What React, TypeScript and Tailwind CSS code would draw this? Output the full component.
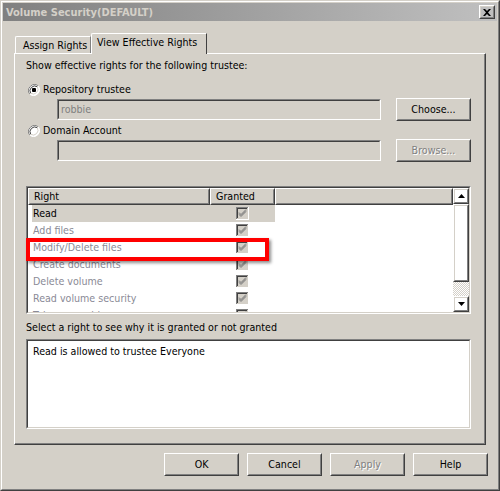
import React from "react";

const FONT = "font-['Tahoma','DejaVu_Sans_Condensed','Liberation_Sans',sans-serif]";

function Raised({ className = "", children }: { className?: string; children?: React.ReactNode }) {
  return (
    <div className={`border border-t-white border-l-white border-r-[#404040] border-b-[#404040] ${className}`}>
      <div className="w-full h-full border border-t-[#d4d0c8] border-l-[#d4d0c8] border-r-[#808080] border-b-[#808080] flex items-center justify-center">
        {children}
      </div>
    </div>
  );
}

function Sunken({ className = "", inner = "", children }: { className?: string; inner?: string; children?: React.ReactNode }) {
  return (
    <div className={`border border-t-[#808080] border-l-[#808080] border-r-white border-b-white ${className}`}>
      <div className={`w-full h-full border border-t-[#404040] border-l-[#404040] border-r-[#d4d0c8] border-b-[#d4d0c8] ${inner}`}>
        {children}
      </div>
    </div>
  );
}

function Button({ label, disabled = false }: { label: string; disabled?: boolean }) {
  return (
    <Raised className="w-[75px] h-[23px]">
      <span className={disabled ? "text-[#808080] [text-shadow:1px_1px_0_#fff]" : "text-black"}>{label}</span>
    </Raised>
  );
}

function Radio({ checked }: { checked: boolean }) {
  return (
    <svg width="12" height="12" viewBox="0 0 12 12" className="shrink-0">
      <circle cx="6" cy="6" r="5.5" fill="#fff" />
      <path d="M10.2 1.8 A6 6 0 0 0 1.8 10.2" stroke="#808080" strokeWidth="1" fill="none" />
      <path d="M9.3 2.7 A4.8 4.8 0 0 0 2.7 9.3" stroke="#404040" strokeWidth="1" fill="none" />
      <path d="M1.8 10.2 A6 6 0 0 0 10.2 1.8" stroke="#fff" strokeWidth="1" fill="none" />
      <path d="M2.7 9.3 A4.8 4.8 0 0 0 9.3 2.7" stroke="#d4d0c8" strokeWidth="1" fill="none" />
      {checked && <rect x="4" y="4" width="4" height="4" rx="1" fill="#000" />}
    </svg>
  );
}

function Check() {
  return (
    <svg width="13" height="13" viewBox="0 0 13 13" className="shrink-0">
      <rect x="0" y="0" width="13" height="13" fill="#fff" />
      <rect x="0" y="0" width="12" height="12" fill="#808080" />
      <rect x="1" y="1" width="11" height="11" fill="#d4d0c8" />
      <rect x="1" y="1" width="10" height="10" fill="#404040" />
      <rect x="2" y="2" width="9" height="9" fill="#d4d0c8" />
      <path d="M3 5.5 L5 7.5 L10 2.5 M3 6.5 L5 8.5 L10 3.5 M3 7.5 L5 9.5 L10 4.5" stroke="#808080" strokeWidth="1" fill="none" />
    </svg>
  );
}

const rows = [
  { t: "Read", sel: true },
  { t: "Add files" },
  { t: "Modify/Delete files" },
  { t: "Create documents" },
  { t: "Delete volume" },
  { t: "Read volume security" },
  { t: "Take ownership" },
];

function Arrow({ down = false }: { down?: boolean }) {
  return (
    <svg width="7" height="4" viewBox="0 0 7 4">
      <path d={down ? "M0 0 H7 L3.5 4 Z" : "M0 4 H7 L3.5 0 Z"} fill="#000" />
    </svg>
  );
}

export default function App() {
  return (
    <div className={`relative w-[500px] h-[491px] bg-[#d4d0c8] text-[10.6px] leading-[13px] text-black ${FONT} border border-t-[#d4d0c8] border-l-[#d4d0c8] border-r-[#404040] border-b-[#404040] overflow-hidden`}>
      <div className="h-full border border-t-white border-l-white border-r-[#808080] border-b-[#808080] p-px flex flex-col">
        {/* Title bar */}
        <div className="h-[18px] bg-[linear-gradient(to_right,#808080,#c0c0c0)] flex items-center pl-[3px] pr-[2px]">
          <span className="font-bold text-[11px] text-[#d4d0c8] flex-1">Volume Security(DEFAULT)</span>
          <Raised className="w-[16px] h-[14px]">
            <svg width="8" height="7" viewBox="0 0 8 7">
              <path d="M0 0 H2 L4 2 L6 0 H8 L5 3.5 L8 7 H6 L4 5 L2 7 H0 L3 3.5 Z" fill="#000" />
            </svg>
          </Raised>
        </div>

        {/* Tabs */}
        <div className="mt-[12px] mx-[11px] flex flex-col">
          <div className="h-[20px] flex items-end pl-[1px] relative z-10">
            <div className="h-[17px] w-[76px] border-t border-l border-t-white border-l-white border-r border-r-[#808080] rounded-tl-[2px] flex items-center pl-[7px]">
              Assign Rights
            </div>
            <div className="h-[21px] w-[116px] -mb-px bg-[#d4d0c8] border-t border-l border-t-white border-l-white border-r border-r-[#404040] rounded-tl-[2px] flex items-center pl-[5px] pb-[3px]">
              View Effective Rights
            </div>
          </div>
          <div className="h-[392px] border border-t-white border-l-white border-r-[#404040] border-b-[#404040]">
            <div className="h-full border-r border-b border-r-[#808080] border-b-[#808080] pl-[11px] pt-[5px] flex flex-col">
              <div>Show effective rights for the following trustee:</div>
              <div className="mt-[11px] h-[13px] flex items-center pl-[2px] gap-[3px]">
                <Radio checked />
                <span>Repository trustee</span>
              </div>
              <div className="mt-[2px] flex items-center h-[23px]">
                <Sunken className="ml-[31px] w-[324px] h-[21px] bg-[#d4d0c8]" inner="flex items-center pl-[2px]">
                  <span className="text-[#808080]">robbie</span>
                </Sunken>
                <div className="ml-[15px]"><Button label="Choose..." /></div>
              </div>
              <div className="mt-[3px] h-[13px] flex items-center pl-[2px] gap-[3px]">
                <Radio checked={false} />
                <span>Domain Account</span>
              </div>
              <div className="mt-[2px] flex items-center h-[23px]">
                <Sunken className="ml-[31px] w-[324px] h-[21px] bg-[#d4d0c8]" />
                <div className="ml-[15px]"><Button label="Browse..." disabled /></div>
              </div>

              {/* List */}
              <Sunken className="mt-[24px] w-[445px] h-[128px] bg-white" inner="flex overflow-hidden">
                <div className="flex-1 flex flex-col overflow-hidden">
                  <div className="h-[17px] flex shrink-0 bg-[#d4d0c8]">
                    <Raised className="w-[182px] h-[17px]">
                      <span className="w-full pl-[4px]">Right</span>
                    </Raised>
                    <Raised className="w-[65px] h-[17px]">
                      <span className="w-full pl-[4px]">Granted</span>
                    </Raised>
                    <Raised className="flex-1 h-[17px]" />
                  </div>
                  {rows.map((r) => (
                    <div key={r.t} className="h-[17px] shrink-0 flex items-center">
                      <div className={`ml-[4px] w-[243px] h-[17px] flex items-center ${r.sel ? "bg-[#d4d0c8]" : ""}`}>
                        <span className={`w-[178px] pl-[1px] ${r.sel ? "text-black" : "text-[#8a8a96]"}`}>{r.t}</span>
                        <div className="w-[65px] flex justify-center"><Check /></div>
                      </div>
                    </div>
                  ))}
                </div>
                <div className="w-[16px] flex flex-col shrink-0">
                  <Raised className="w-[16px] h-[16px]"><Arrow /></Raised>
                  <Raised className="w-[16px] h-[78px]" />
                  <div className="flex-1 bg-[conic-gradient(#ffffff_25%,#d4d0c8_0_50%,#ffffff_0_75%,#d4d0c8_0)] bg-[length:2px_2px]" />
                  <Raised className="w-[16px] h-[16px]"><Arrow down /></Raised>
                </div>
              </Sunken>

              <div className="mt-[7px]">Select a right to see why it is granted or not granted</div>
              <Sunken className="mt-[5px] w-[445px] h-[90px] bg-white" inner="pl-[5px] pt-[4px]">
                Read is allowed to trustee Everyone
              </Sunken>
            </div>
          </div>
        </div>

        {/* Buttons */}
        <div className="mt-[8px] flex justify-end gap-2 pr-[9px]">
          <Button label="OK" />
          <Button label="Cancel" />
          <Button label="Apply" disabled />
          <Button label="Help" />
        </div>
      </div>

      {/* Red highlight annotation */}
      <div className="absolute left-[25px] top-[237px] w-[243px] h-[23px] border-[4px] border-[#ff0000] shadow-[2px_2px_3px_rgba(0,0,0,0.45)]" />
    </div>
  );
}
